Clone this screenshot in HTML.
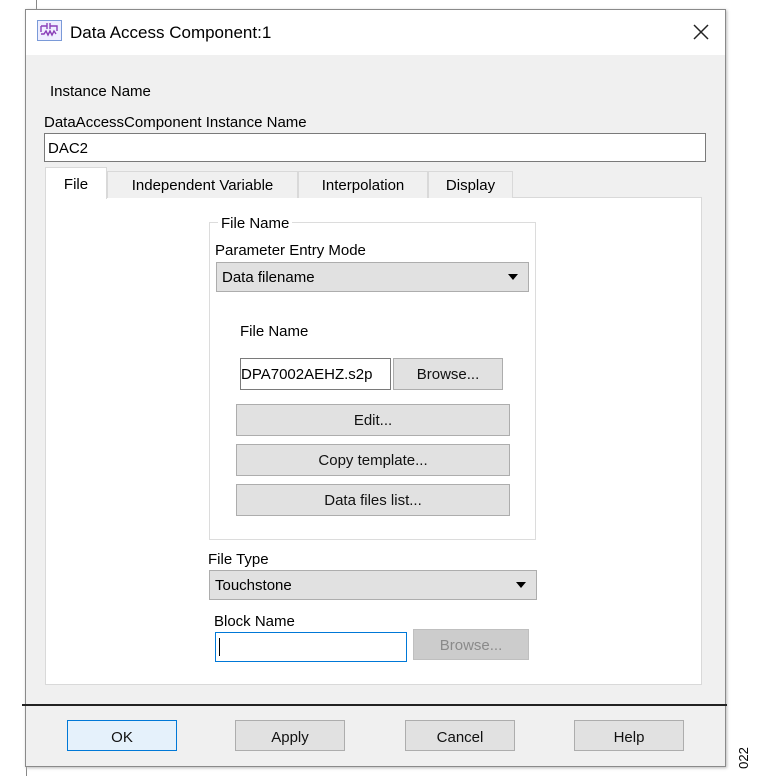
<!DOCTYPE html>
<html><head><meta charset="utf-8"><style>
*{box-sizing:border-box;margin:0;padding:0}
body{width:760px;height:776px;background:#fff;position:relative;overflow:hidden;font-family:"Liberation Sans",sans-serif;font-size:15px;color:#000}
.a{position:absolute}
.t{position:absolute;white-space:nowrap;line-height:18px}
.btn{position:absolute;background:#e1e1e1;border:1px solid #adadad;text-align:center;white-space:nowrap;color:#111}
.dd{position:absolute;background:#e1e1e1;border:1px solid #adadad;padding-left:5px;white-space:nowrap}
.dd:after{content:"";position:absolute;right:10px;top:11px;border-left:5px solid transparent;border-right:5px solid transparent;border-top:6px solid #000}
.inp{position:absolute;background:#fff;border:1px solid #7a7a7a;white-space:nowrap;overflow:hidden}
.tab{position:absolute;top:171px;height:27px;background:#f0f0f0;border:1px solid #d9d9d9;border-bottom:none;text-align:center;line-height:28px}
</style></head><body>
<div class="a" style="left:36px;top:0;width:1px;height:10px;background:#888"></div>
<div class="a" style="left:26px;top:766px;width:1px;height:10px;background:#888"></div>
<div class="a" style="left:25px;top:9px;width:701px;height:758px;background:#f0f0f0;border:1px solid #8a8a8a;box-shadow:1px 1px 3px #bbb"></div>
<div class="a" style="left:26px;top:10px;width:699px;height:45px;background:#fff"></div>
<svg class="a" style="left:37px;top:20px" width="25" height="21" viewBox="0 0 25 21"><rect x="0.5" y="0.5" width="24" height="20" fill="#eef" stroke="#7a9ad8"/><path d="M4 6h6M10 3v6M13 3v6M13 6h7v5M4 6v6M4 14h3l2-3 2 4 2-4 2 4 2-4 2 3" stroke="#8a3fb8" stroke-width="1.4" fill="none"/></svg>
<div class="t" style="left:70px;top:24px;font-size:17px">Data Access Component:1</div>
<svg class="a" style="left:693px;top:24px" width="16" height="16"><path d="M1 1L15 15M15 1L1 15" stroke="#222" stroke-width="1.5"/></svg>

<div class="t" style="left:50px;top:83px">Instance Name</div>
<div class="t" style="left:44px;top:114px">DataAccessComponent Instance Name</div>
<div class="inp" style="left:44px;top:133px;width:662px;height:29px;padding:6px 3px">DAC2</div>

<div class="a" style="left:45px;top:197px;width:657px;height:488px;background:#fff;border:1px solid #d9d9d9"></div>
<div class="tab" style="left:107px;width:191px">Independent Variable</div>
<div class="tab" style="left:298px;width:130px">Interpolation</div>
<div class="tab" style="left:428px;width:85px">Display</div>
<div class="tab" style="left:45px;top:167px;height:32px;width:62px;background:#fff;line-height:34px">File</div>

<div class="a" style="left:209px;top:222px;width:327px;height:318px;border:1px solid #dcdcdc"></div>
<div class="t" style="left:218px;top:215px;background:#fff;padding:0 3px">File Name</div>
<div class="t" style="left:215px;top:242px">Parameter Entry Mode</div>
<div class="dd" style="left:216px;top:262px;width:313px;height:30px;line-height:30px">Data filename</div>
<div class="t" style="left:240px;top:323px">File Name</div>
<div class="inp" style="left:240px;top:358px;width:151px;height:32px;line-height:32px;padding-left:0">DPA7002AEHZ.s2p</div>
<div class="btn" style="left:393px;top:358px;width:110px;height:32px;line-height:32px">Browse...</div>
<div class="btn" style="left:236px;top:404px;width:274px;height:32px;line-height:32px">Edit...</div>
<div class="btn" style="left:236px;top:444px;width:274px;height:32px;line-height:32px">Copy template...</div>
<div class="btn" style="left:236px;top:484px;width:274px;height:32px;line-height:32px">Data files list...</div>

<div class="t" style="left:208px;top:551px">File Type</div>
<div class="dd" style="left:209px;top:570px;width:328px;height:30px;line-height:30px">Touchstone</div>
<div class="t" style="left:214px;top:613px">Block Name</div>
<div class="inp" style="left:215px;top:632px;width:192px;height:30px;border-color:#0078d7;padding:5px 3px"><div style="width:1px;height:18px;background:#000"></div></div>
<div class="btn" style="left:413px;top:629px;width:116px;height:31px;line-height:31px;color:#8a8a8a;background:#ccc;border-color:#bfbfbf">Browse...</div>

<div class="a" style="left:22px;top:704px;width:705px;height:2px;background:#222"></div>
<div class="btn" style="left:67px;top:720px;width:110px;height:31px;line-height:33px;background:#e5f1fb;border-color:#0078d7">OK</div>
<div class="btn" style="left:235px;top:720px;width:110px;height:31px;line-height:33px">Apply</div>
<div class="btn" style="left:405px;top:720px;width:110px;height:31px;line-height:33px">Cancel</div>
<div class="btn" style="left:574px;top:720px;width:110px;height:31px;line-height:33px">Help</div>
<div class="t" style="left:733px;top:749px;font-size:13px;transform:rotate(-90deg)">022</div>
</body></html>
